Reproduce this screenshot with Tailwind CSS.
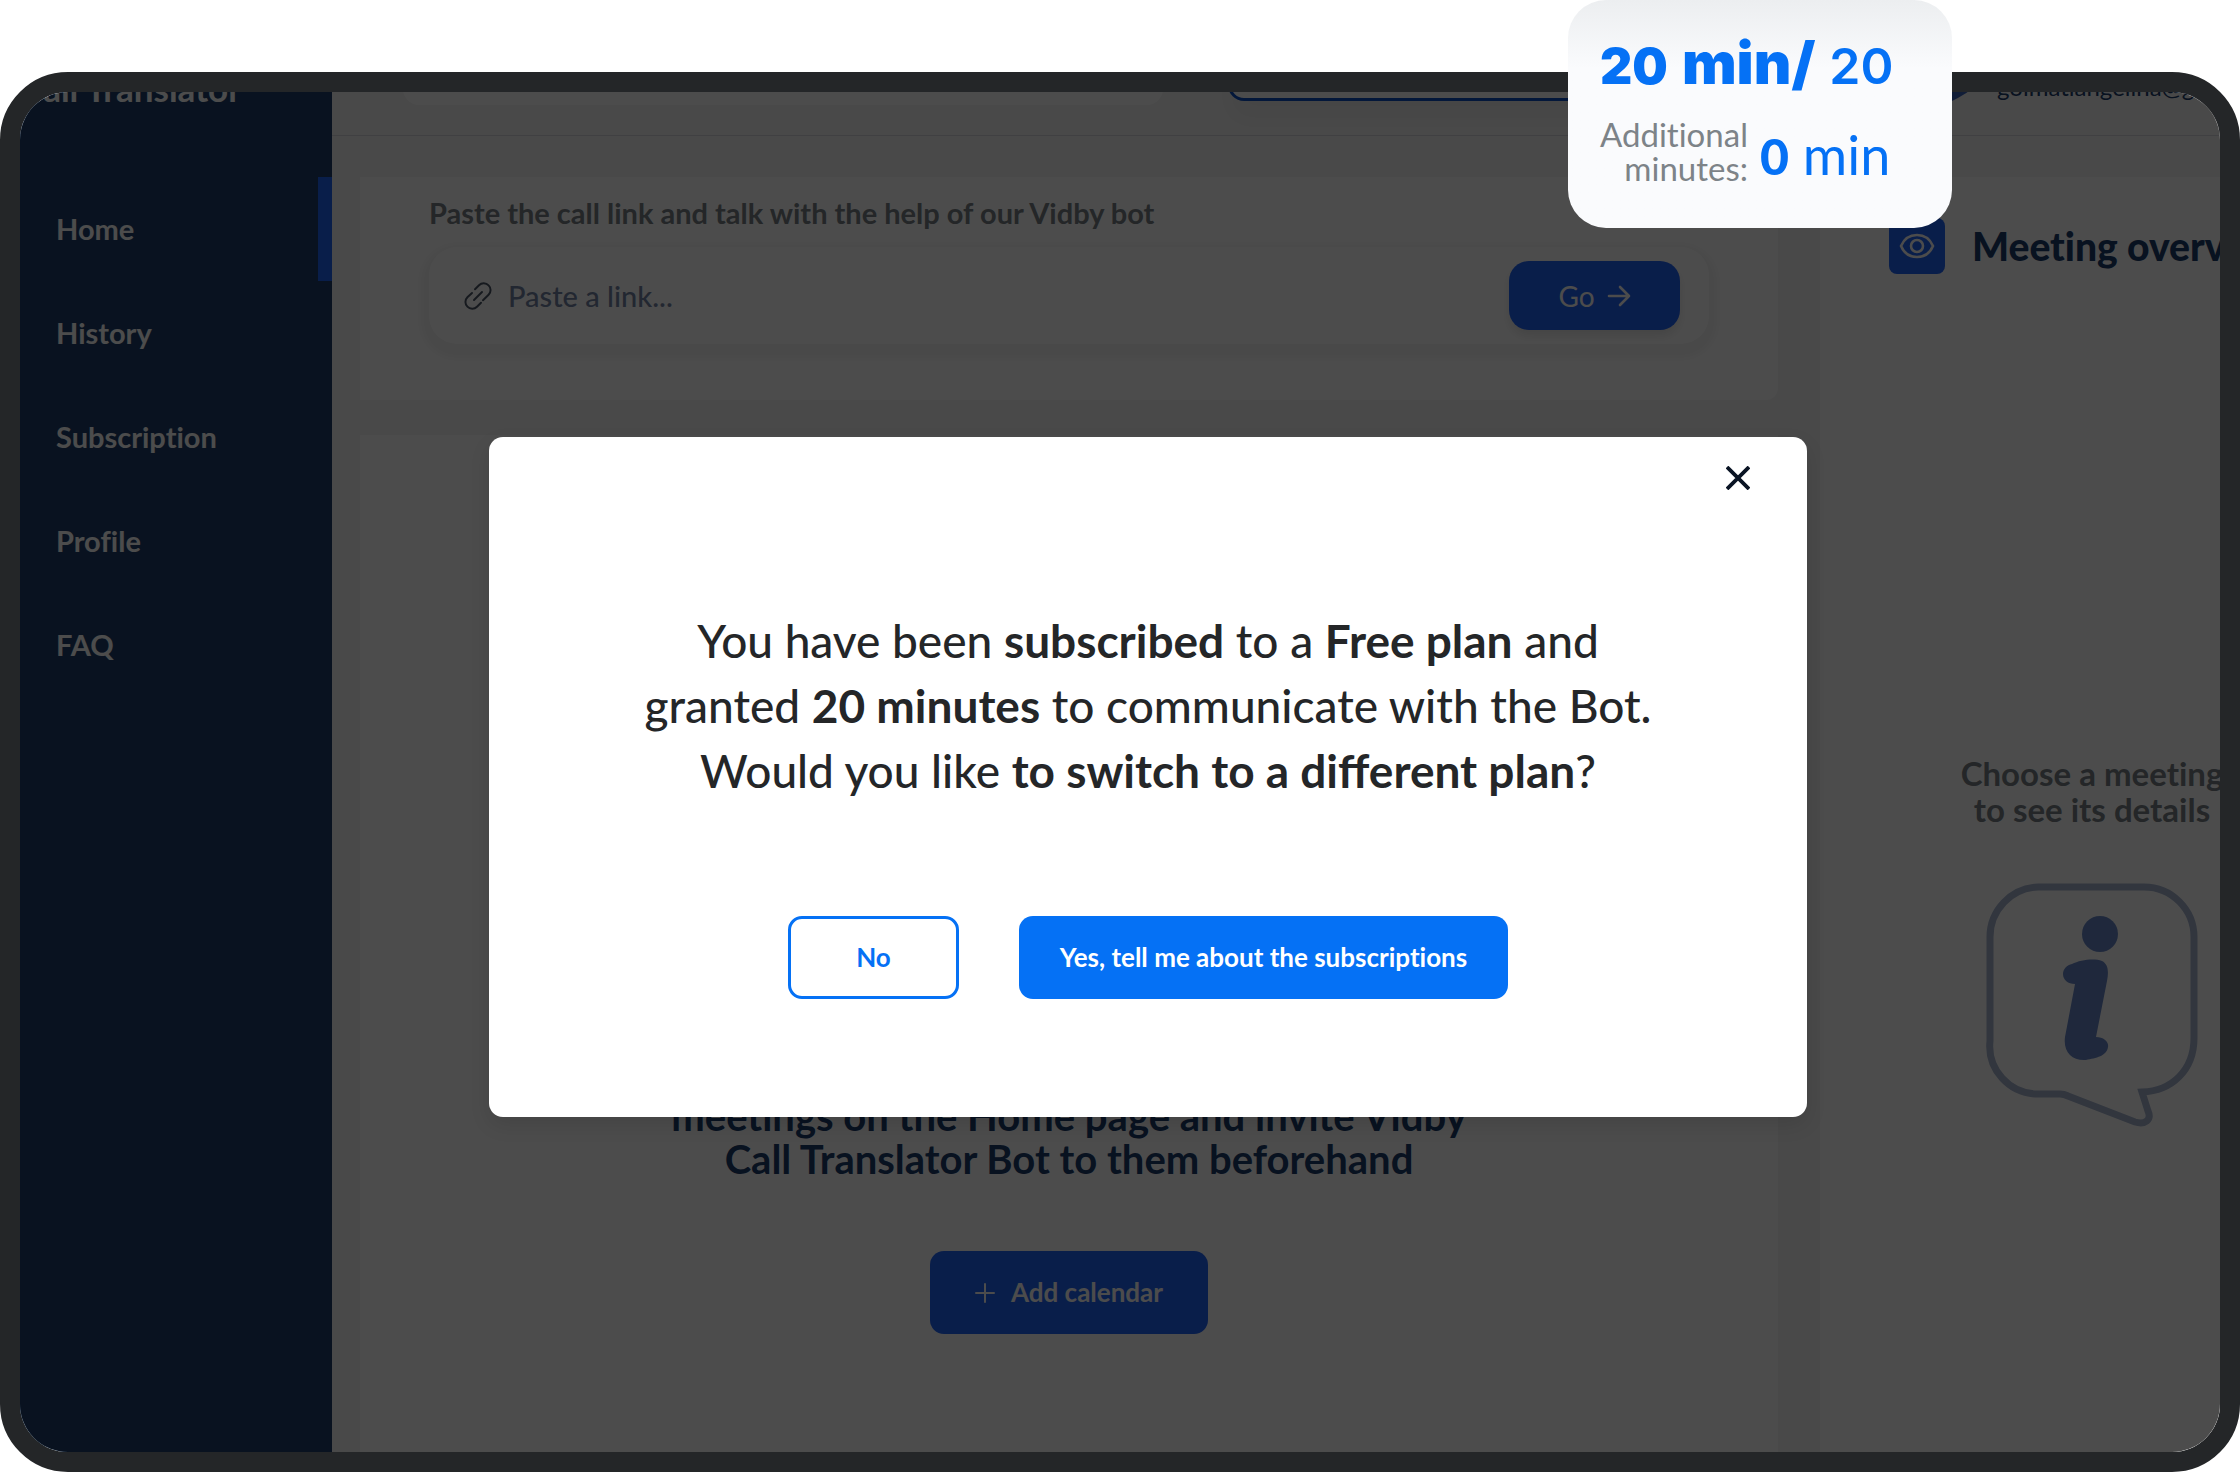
<!DOCTYPE html>
<html lang="en">
  <head>
    <meta charset="UTF-8" />
    <meta name="viewport" content="width=device-width, initial-scale=1.0" />
    <title>Vidby Call Translator</title>
    <!-- Tailwind CSS CDN -->
    <script src="https://cdn.jsdelivr.net/npm/@tailwindcss/browser@4"></script>
  </head>
  <body class="relative flex flex-col min-h-screen pt-[72px] bg-white font-['Lato',sans-serif] [font-variant-ligatures:no-common-ligatures] overflow-x-hidden">
    <!-- Device frame -->
    <div class="relative grow flex border-[20px] border-[#242628] rounded-[68px] bg-[#f5f5f5] overflow-hidden">
      <!-- Sidebar -->
      <aside class="w-[312px] shrink-0 bg-[#1e3f6b] text-white font-bold">
        <div class="h-[85px]">
          <p class="h-[14px] flex items-end text-[35px] leading-none whitespace-nowrap">Call Translator</p>
        </div>
        <nav class="flex flex-col text-[29px] leading-9">
          <a href="#home" class="h-[104px] pl-9 flex items-center border-r-[14px] border-[#2164f7]">Home</a>
          <a href="#history" class="h-[104px] pl-9 flex items-center">History</a>
          <a href="#subscription" class="h-[104px] pl-9 flex items-center">Subscription</a>
          <a href="#profile" class="h-[104px] pl-9 flex items-center">Profile</a>
          <a href="#faq" class="h-[104px] pl-9 flex items-center">FAQ</a>
        </nav>
      </aside>

      <div class="grow min-w-0 flex flex-col">
        <!-- Header, scrolled partly out of view -->
        <header class="h-11 flex items-end overflow-hidden border-b border-[#d5d5dc] pl-[71px] pb-[30px]">
          <div class="w-[760px] h-20 shrink-0 rounded-2xl bg-white"></div>
          <div class="w-[420px] h-20 shrink-0 ml-[65px] mb-1 rounded-2xl border-3 border-[#0a4fc4] bg-white shadow-[0_20px_24px_#0000000a]"></div>
          <div class="size-[180px] shrink-0 ml-[177px] -mb-1 rounded-full bg-[#3b62b8]"></div>
          <p class="-ml-2 mb-1 text-[24px] leading-7 text-[#1b3c6b] whitespace-nowrap">goimatiangelina@gmail.com</p>
        </header>

        <div class="grow flex pt-[41px]">
          <main class="grow min-w-0 pl-7 flex flex-col gap-[35px]">
            <section class="h-[223px] px-[69px] pt-[18px] rounded-br-xl bg-white">
              <label for="link" class="block text-[29px] leading-9 font-bold text-[#787f85]">Paste the call link and talk with the help of our Vidby bot</label>
              <div class="mt-4 h-[97px] flex items-center pl-[35px] pr-[29px] rounded-[28px] bg-white shadow-[0_6px_8px_8px_#0000000c]">
                <svg class="size-7 shrink-0 text-[#4a5666]" viewBox="0 0 28 28" fill="none" stroke="currentColor" stroke-width="2" stroke-linecap="round">
                  <path d="M11 7.2 15 3.2a6.6 6.6 0 0 1 9.6 0.2 6.6 6.6 0 0 1 0 9.4l-5.6 5.4" />
                  <path d="M17 20.8 13 24.8a6.6 6.6 0 0 1-9.6-0.2 6.6 6.6 0 0 1 0-9.4l4.6-4.2" />
                  <path d="M10 18l8-8" />
                </svg>
                <input id="link" type="text" placeholder="Paste a link..." class="grow min-w-0 ml-4 text-[29px] leading-9 font-medium bg-transparent outline-none placeholder:text-[#7484a4]" />
                <button type="button" class="w-[171px] h-[69px] shrink-0 flex items-center justify-center gap-3 rounded-[20px] bg-[#2164f7] text-white text-[28px] shadow-[0_6px_10px_#00000018]">
                  Go
                  <svg class="size-6" viewBox="0 0 24 24" fill="none" stroke="currentColor" stroke-width="2.6" stroke-linecap="round" stroke-linejoin="round">
                    <path d="M2 12h20M13 3l9 9-9 9" />
                  </svg>
                </button>
              </div>
            </section>

            <section class="grow flex flex-col items-center pt-[660px] pb-20 bg-white text-center">
              <p class="text-[40px] leading-[43px] font-bold text-[#1b3c6b]">meetings on the Home page and invite Vidby<br />Call Translator Bot to them beforehand</p>
              <button type="button" class="mt-[70px] w-[278px] h-[83px] flex items-center justify-center gap-4 rounded-[14px] bg-[#2164f7] text-white text-[26px] font-bold">
                <svg class="size-5" viewBox="0 0 20 20" fill="none" stroke="currentColor" stroke-width="2" stroke-linecap="round">
                  <path d="M10 1v18M1 10h18" />
                </svg>
                Add calendar
              </button>
            </section>
          </main>

          <!-- Meeting overview panel runs past the right edge -->
          <aside class="w-[544px] shrink-0 ml-[42px] -mr-[144px] bg-white">
            <h2 class="flex items-center gap-[27px] pl-[69px] pt-[41px] text-[39px] leading-none font-black text-[#1b3c6b] whitespace-nowrap">
              <span class="size-14 flex items-center justify-center rounded-lg bg-[#2164f7] text-white">
                <svg class="size-9" viewBox="0 0 36 36" fill="none" stroke="currentColor" stroke-width="2.6">
                  <path d="M2 18C5 11 11 7 18 7s13 4 16 11c-3 7-9 11-16 11S5 25 2 18Z" />
                  <circle cx="18" cy="18" r="6" />
                </svg>
              </span>
              Meeting overview
            </h2>
            <p class="mt-[481px] text-center text-[33px] leading-9 font-bold text-[#787f85]">Choose a meeting<br />to see its details</p>
            <svg class="mx-auto mt-[56px] w-[212px] h-[244px]" viewBox="0 0 212 244" fill="none">
              <path d="M52 4H158a50 50 0 0 1 50 50V155c0 32-22 53-52 54l6 19c4 9-3 14-13 11L82 213q-4-2-8-2H52A48 48 0 0 1 4 158V54A50 50 0 0 1 52 4Z" stroke="#a7b5d0" stroke-width="7" />
              <circle cx="114" cy="51" r="18" fill="#6888c8" />
              <path d="M86 81c8-4 22-6 30-3 6 3 7 10 5 20l-11 56c8 0 13 5 12 10-1 9-12 11-22 13-14 1-23-8-21-23l10-53c-7 0-12-4-12-10 0-5 4-9 9-10Z" fill="#6888c8" />
            </svg>
          </aside>
        </div>
      </div>

      <!-- Modal -->
      <div class="absolute inset-0 flex items-center justify-center pl-14 pt-[10px] bg-black/70">
        <div role="dialog" aria-modal="true" class="relative w-[1318px] h-[680px] flex flex-col items-center pt-[171px] rounded-[14px] bg-white text-[#242628] shadow-[0_8px_20px_#0000001a]">
          <button type="button" aria-label="Close" class="absolute top-[28px] right-[56px] p-[1px] text-[#0a1424]">
            <svg class="size-6" viewBox="0 0 24 24" fill="none" stroke="currentColor" stroke-width="3.8">
              <path d="M1 1l22 22M23 1 1 23" />
            </svg>
          </button>
          <p class="text-center text-[46px] leading-[65px] font-medium [font-variant-ligatures:normal]">
            You have been <b>subscribed</b> to a <b>Free plan</b> and<br />
            granted <b>20 minutes</b> to communicate with the Bot.<br />
            Would you like <b>to switch to a different plan</b>?
          </p>
          <div class="mt-[113px] flex gap-[60px] text-[26px] font-bold">
            <button type="button" class="w-[171px] h-[83px] rounded-[14px] border-3 border-[#0571f5] text-[#0571f5]">No</button>
            <button type="button" class="w-[489px] h-[83px] rounded-[14px] bg-[#0571f5] text-white">Yes, tell me about the subscriptions</button>
          </div>
        </div>
      </div>
    </div>

    <!-- Minutes left badge -->
    <div class="absolute top-0 right-[288px] w-[384px] h-[228px] rounded-[38px] bg-linear-to-b from-[#eceef0] to-[#fafbfd] to-30% text-[#0571f5]">
      <p class="pl-8 pt-7 flex items-baseline gap-[14px] leading-[70px] whitespace-nowrap font-['Inter',sans-serif] font-black">
        <span class="text-[50px]">20</span>
        <span class="text-[58px]">min/</span>
        <span class="text-[50px] font-semibold">20</span>
      </p>
      <div class="pl-8 pt-4 flex items-start gap-3">
        <p class="text-right text-[33px] leading-[34px] text-[#7d8388]">Additional<br />minutes:</p>
        <p class="text-[54px] leading-[76px] whitespace-nowrap"><span class="text-[50px] font-black">0</span> min</p>
      </div>
    </div>
  </body>
</html>
